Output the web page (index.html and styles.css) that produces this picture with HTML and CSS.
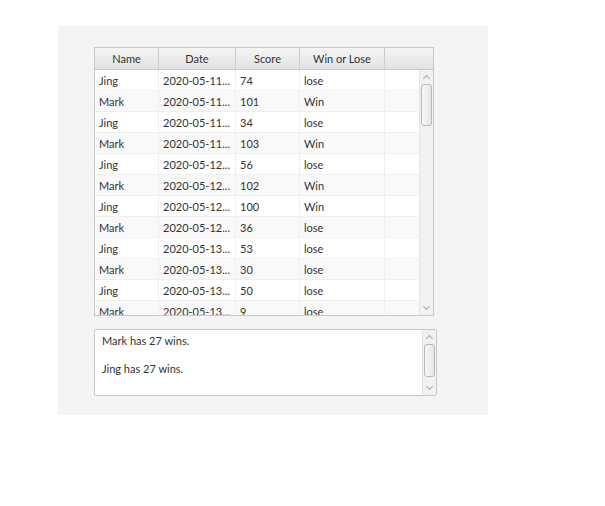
FILE: index.html
```html
<!DOCTYPE html>
<html lang="en">

<head>
    <meta charset="UTF-8">
    <meta name="viewport" content="width=device-width, initial-scale=1.0">
    <title>Scores</title>
    <link rel="stylesheet" href="styles.css">
</head>

<body>
    <div class="panel">
        <div class="table">
            <div class="head">
                <div class="th">Name</div>
                <div class="th">Date</div>
                <div class="th">Score</div>
                <div class="th">Win or Lose</div>
                <div class="th filler"></div>
            </div>
            <div class="body">
                <div class="rows">
                    <div class="row"><div>Jing</div><div>2020-05-11...</div><div>74</div><div>lose</div><div></div></div>
                    <div class="row"><div>Mark</div><div>2020-05-11...</div><div>101</div><div>Win</div><div></div></div>
                    <div class="row"><div>Jing</div><div>2020-05-11...</div><div>34</div><div>lose</div><div></div></div>
                    <div class="row"><div>Mark</div><div>2020-05-11...</div><div>103</div><div>Win</div><div></div></div>
                    <div class="row"><div>Jing</div><div>2020-05-12...</div><div>56</div><div>lose</div><div></div></div>
                    <div class="row"><div>Mark</div><div>2020-05-12...</div><div>102</div><div>Win</div><div></div></div>
                    <div class="row"><div>Jing</div><div>2020-05-12...</div><div>100</div><div>Win</div><div></div></div>
                    <div class="row"><div>Mark</div><div>2020-05-12...</div><div>36</div><div>lose</div><div></div></div>
                    <div class="row"><div>Jing</div><div>2020-05-13...</div><div>53</div><div>lose</div><div></div></div>
                    <div class="row"><div>Mark</div><div>2020-05-13...</div><div>30</div><div>lose</div><div></div></div>
                    <div class="row"><div>Jing</div><div>2020-05-13...</div><div>50</div><div>lose</div><div></div></div>
                    <div class="row"><div>Mark</div><div>2020-05-13...</div><div>9</div><div>lose</div><div></div></div>
                </div>
                <div class="scrollbar">
                    <span class="arrow up"></span>
                    <div class="track"><div class="thumb table-thumb"></div></div>
                    <span class="arrow down"></span>
                </div>
            </div>
        </div>

        <div class="textarea">
            <div class="content">
                <p>Mark has 27 wins.</p>
                <p>Jing has 27 wins.</p>
            </div>
            <div class="scrollbar">
                <span class="arrow up"></span>
                <div class="track"><div class="thumb text-thumb"></div></div>
                <span class="arrow down"></span>
            </div>
        </div>
    </div>
</body>

</html>
```

FILE: styles.css
```css
body {
    margin: 0;
    background-color: #fff;
    font-family: Lato, "Open Sans", sans-serif;
    font-size: 11px;
    color: #333;
}

.panel {
    width: 394px;
    height: 368px;
    margin: 26px 0 0 58px;
    padding: 21px 0 0 36px;
    background-color: #f4f4f4;
}

.table {
    width: 338px;
    height: 267px;
    border: 1px solid #c8c8c8;
    background-color: #fff;
    display: flex;
    flex-direction: column;
}

.head {
    display: flex;
    height: 21px;
    border-bottom: 1px solid #c8c8c8;
    background: linear-gradient(#f5f5f5, #e2e2e2);
}

.th {
    line-height: 22px;
    text-align: center;
    border-right: 1px solid #cdcdcd;
    box-sizing: border-box;
}

.th:nth-child(1) { width: 64px; }
.th:nth-child(2) { width: 77px; }
.th:nth-child(3) { width: 64px; }
.th:nth-child(4) { width: 85px; }
.th.filler { flex: 1; border-right: none; }

.body {
    flex: 1;
    display: flex;
    overflow: hidden;
}

.rows {
    flex: 1;
    overflow: hidden;
}

.row {
    display: grid;
    grid-template-columns: 64px 77px 64px 85px 1fr;
    height: 21px;
    line-height: 22px;
    border-bottom: 1px solid #f0f0f0;
    box-sizing: border-box;
}

.row:nth-child(even) {
    background-color: #f9f9f9;
}

.row div {
    padding-left: 4px;
    border-right: 1px solid #efefef;
    white-space: nowrap;
    overflow: hidden;
}

.row div:last-child {
    border-right: none;
}

.scrollbar {
    width: 13px;
    display: flex;
    flex-direction: column;
    align-items: center;
    background-color: #f1f1f1;
    border-left: 1px solid #e4e4e4;
}

.arrow {
    width: 4px;
    height: 4px;
    border-left: 1px solid #a8a8a8;
    border-top: 1px solid #a8a8a8;
    margin: 5px 0 3px;
}

.arrow.up { transform: rotate(45deg); margin-top: 6px; }
.arrow.down { transform: rotate(225deg); margin: 1px 0 6px; }

.track {
    flex: 1;
    width: 100%;
    display: flex;
    flex-direction: column;
    align-items: center;
}

.thumb {
    width: 9px;
    border: 1px solid #b9b9b9;
    border-radius: 3px;
    background: linear-gradient(to right, #f7f7f7, #e6e6e6);
}

.table-thumb { height: 40px; }
.text-thumb { height: 31px; }

.textarea {
    width: 341px;
    height: 65px;
    margin-top: 13px;
    border: 1px solid #c8c8c8;
    border-radius: 2px;
    background-color: #fff;
    display: flex;
}

.content {
    flex: 1;
    padding: 3px 0 0 7px;
}

.content p {
    margin: 0 0 13px;
    line-height: 15px;
}

.textarea .scrollbar {
    border-radius: 0 2px 2px 0;
}
```
